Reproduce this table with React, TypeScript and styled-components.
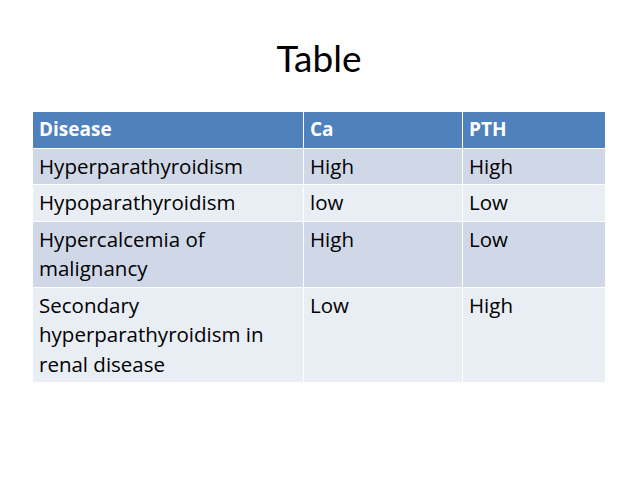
import React from "react";
import styled, { createGlobalStyle } from "styled-components";

const Global = createGlobalStyle`
  html, body { margin: 0; padding: 0; background: #ffffff; }
  body { font-family: "Open Sans", "Lato", sans-serif; }
`;

const Slide = styled.div`
  width: 638px;
  height: 479px;
  background: #ffffff;
  display: flex;
  flex-direction: column;
  align-items: flex-start;
`;

const Title = styled.h1`
  align-self: stretch;
  margin: 36px 0 0 0;
  height: 76px;
  text-align: center;
  font-family: "Lato", sans-serif;
  font-weight: 400;
  font-size: 37px;
  line-height: 44px;
  color: #000000;
`;

const Table = styled.table`
  margin-left: 32px;
  width: 574px;
  border-collapse: collapse;
  table-layout: fixed;
`;

const Col = styled.col<{ $w?: number }>`
  width: ${(p) => (p.$w ? `${p.$w}px` : "auto")};
`;

const Cell = styled.td<{ $head?: boolean; $alt?: boolean }>`
  box-sizing: border-box;
  background: ${(p) => (p.$head ? "#4f81bd" : p.$alt ? "#e9edf4" : "#d0d8e8")};
  color: ${(p) => (p.$head ? "#ffffff" : "#000000")};
  font-family: "Open Sans", sans-serif;
  font-weight: ${(p) => (p.$head ? 700 : 400)};
  font-size: ${(p) => (p.$head ? "19px" : "20.5px")};
  line-height: 29.5px;
  padding: 3px 6px 3px 6px;
  vertical-align: top;
  text-align: left;
  border: 1.5px solid #ffffff;
  border-top: ${(p) => (p.$head ? "none" : "1.5px solid #ffffff")};
`;

const rows: [string, string, string][] = [
  ["Hyperparathyroidism", "High", "High"],
  ["Hypoparathyroidism", "low", "Low"],
  ["Hypercalcemia of malignancy", "High", "Low"],
  ["Secondary hyperparathyroidism in renal disease", "Low", "High"],
];

export default function App() {
  return (
    <Slide>
      <Global />
      <Title>Table</Title>
      <Table>
        <colgroup>
          <Col $w={271} />
          <Col $w={159} />
          <Col />
        </colgroup>
        <thead>
          <tr>
            <Cell as="th" $head>Disease</Cell>
            <Cell as="th" $head>Ca</Cell>
            <Cell as="th" $head>PTH</Cell>
          </tr>
        </thead>
        <tbody>
          {rows.map((r, i) => (
            <tr key={i}>
              <Cell $alt={i % 2 === 1}>{r[0]}</Cell>
              <Cell $alt={i % 2 === 1}>{r[1]}</Cell>
              <Cell $alt={i % 2 === 1}>{r[2]}</Cell>
            </tr>
          ))}
        </tbody>
      </Table>
    </Slide>
  );
}
